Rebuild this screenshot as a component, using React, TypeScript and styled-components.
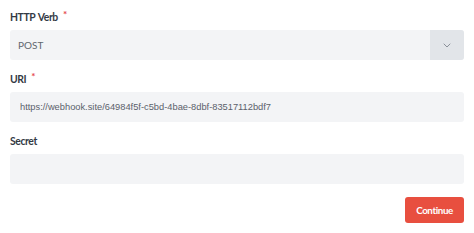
import React, { useState } from 'react'
import styled, { createGlobalStyle } from 'styled-components'

const GlobalStyle = createGlobalStyle`
  body {
    margin: 0;
    background: #ffffff;
    font-family: Lato, sans-serif;
  }
`

const Form = styled.form`
  width: 474px;
  padding: 10px 10px 0 10px;
  box-sizing: border-box;
  display: flex;
  flex-direction: column;
`

const Field = styled.div`
  display: flex;
  flex-direction: column;
  margin-bottom: 12px;
`

const Label = styled.label`
  height: 14px;
  line-height: 14px;
  margin-bottom: 6px;
  font-family: Lato, sans-serif;
  font-size: 10.4px;
  font-weight: 700;
  letter-spacing: -0.4px;
  word-spacing: 1px;
  color: #343a45;
`

const Required = styled.span`
  color: #e5484d;
  margin-left: 5px;
  font-size: 10px;
  letter-spacing: 0;
  position: relative;
  top: -3px;
`

const Input = styled.input`
  height: 30px;
  box-sizing: border-box;
  border: none;
  outline: none;
  border-radius: 3px;
  background: #f3f4f6;
  padding: 0 10px;
  font-family: 'Liberation Sans', Arial, sans-serif;
  font-size: 9.3px;
  color: #5b616b;
`

const SelectBox = styled.div`
  height: 30px;
  display: flex;
  border-radius: 3px;
  background: #f3f4f6;
  overflow: hidden;
`

const SelectValue = styled.div`
  flex: 1;
  display: flex;
  align-items: center;
  padding: 0 8px;
  font-family: Lato, sans-serif;
  font-size: 10px;
  color: #62676f;
`

const SelectArrow = styled.div`
  width: 34px;
  display: flex;
  align-items: center;
  justify-content: center;
  background: #e2e5e9;
`

const Actions = styled.div`
  display: flex;
  justify-content: flex-end;
  margin-top: 1px;
`

const Button = styled.button`
  width: 59px;
  height: 26px;
  border: none;
  border-radius: 3px;
  background: #e84f3f;
  color: #ffffff;
  font-family: Lato, sans-serif;
  font-size: 9.8px;
  font-weight: 700;
  letter-spacing: -0.4px;
  padding: 0;
  cursor: pointer;
`

const App = () => {
  const [uri, setUri] = useState(
    'https://webhook.site/64984f5f-c5bd-4bae-8dbf-83517112bdf7'
  )
  const [secret, setSecret] = useState('')

  return (
    <>
      <GlobalStyle />
      <Form onSubmit={(e) => e.preventDefault()}>
        <Field>
          <Label>
            HTTP Verb<Required>*</Required>
          </Label>
          <SelectBox>
            <SelectValue>POST</SelectValue>
            <SelectArrow>
              <svg width="8" height="5" viewBox="0 0 8 5" fill="none">
                <path
                  d="M1 1l3 3 3-3"
                  stroke="#8a9099"
                  strokeWidth="1"
                  strokeLinecap="round"
                  strokeLinejoin="round"
                />
              </svg>
            </SelectArrow>
          </SelectBox>
        </Field>
        <Field>
          <Label>
            URI<Required>*</Required>
          </Label>
          <Input value={uri} onChange={(e) => setUri(e.target.value)} />
        </Field>
        <Field>
          <Label>Secret</Label>
          <Input value={secret} onChange={(e) => setSecret(e.target.value)} />
        </Field>
        <Actions>
          <Button type="submit">Continue</Button>
        </Actions>
      </Form>
    </>
  )
}

export default App
